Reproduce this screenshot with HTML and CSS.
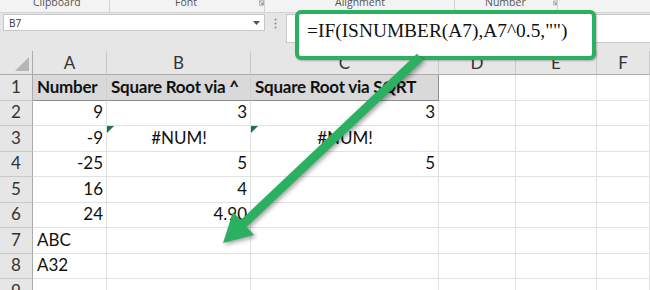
FILE: index.html
```html
<!DOCTYPE html>
<html>
<head>
<meta charset="utf-8">
<link rel="stylesheet" href="styles.css">
</head>
<body>
<div class="page">
  <div class="ribbon">
    <div class="grp g1"><span class="lbl">Clipboard</span><svg class="launch" viewBox="0 0 7 7"><path d="M0.5 0.5h6v6h-6z" fill="none" stroke="#8a8a8a"/><path d="M2 2l3 3M5 3v2h-2" fill="none" stroke="#666"/></svg></div>
    <div class="grp g2"><span class="lbl">Font</span><svg class="launch" viewBox="0 0 7 7"><path d="M0.5 0.5h6v6h-6z" fill="none" stroke="#8a8a8a"/><path d="M2 2l3 3M5 3v2h-2" fill="none" stroke="#666"/></svg></div>
    <div class="grp g3"><span class="lbl">Alignment</span><svg class="launch" viewBox="0 0 7 7"><path d="M0.5 0.5h6v6h-6z" fill="none" stroke="#8a8a8a"/><path d="M2 2l3 3M5 3v2h-2" fill="none" stroke="#666"/></svg></div>
    <div class="grp g4"><span class="lbl">Number</span><svg class="launch" viewBox="0 0 7 7"><path d="M0.5 0.5h6v6h-6z" fill="none" stroke="#8a8a8a"/><path d="M2 2l3 3M5 3v2h-2" fill="none" stroke="#666"/></svg></div>
  </div>
  <div class="fbar">
    <div class="namebox"><span class="nbtext">B7</span><svg class="dd" viewBox="0 0 7 4"><path d="M0 0h7l-3.5 4z" fill="#555"/></svg></div>
    <svg class="dots" viewBox="0 0 3 11"><circle cx="1.5" cy="1.5" r="1" fill="#888"/><circle cx="1.5" cy="5.5" r="1" fill="#888"/><circle cx="1.5" cy="9.5" r="1" fill="#888"/></svg>
    <div class="finput"></div>
  </div>
  <div class="sheet">
    <div class="corner"><svg class="tri" viewBox="0 0 14 14"><path d="M14 0v14h-14z" fill="#b5b5b5"/></svg></div>
    <div class="ch">A</div><div class="ch">B</div><div class="ch">C</div><div class="ch">D</div><div class="ch">E</div><div class="ch">F</div>

    <div class="rh">1</div><div class="c hd">Number</div><div class="c hd">Square Root via ^</div><div class="c hd hdl">Square Root via SQRT</div><div class="c"></div><div class="c"></div><div class="c"></div>
    <div class="rh">2</div><div class="c r">9</div><div class="c r">3</div><div class="c r">3</div><div class="c"></div><div class="c"></div><div class="c"></div>
    <div class="rh">3</div><div class="c r">-9</div><div class="c m err">#NUM!</div><div class="c m err">#NUM!</div><div class="c"></div><div class="c"></div><div class="c"></div>
    <div class="rh">4</div><div class="c r">-25</div><div class="c r">5</div><div class="c r">5</div><div class="c"></div><div class="c"></div><div class="c"></div>
    <div class="rh">5</div><div class="c r">16</div><div class="c r">4</div><div class="c"></div><div class="c"></div><div class="c"></div><div class="c"></div>
    <div class="rh">6</div><div class="c r">24</div><div class="c r">4.90</div><div class="c"></div><div class="c"></div><div class="c"></div><div class="c"></div>
    <div class="rh">7</div><div class="c">ABC</div><div class="c"></div><div class="c"></div><div class="c"></div><div class="c"></div><div class="c"></div>
    <div class="rh">8</div><div class="c">A32</div><div class="c"></div><div class="c"></div><div class="c"></div><div class="c"></div><div class="c"></div>
    <div class="rh">9</div><div class="c"></div><div class="c"></div><div class="c"></div><div class="c"></div><div class="c"></div><div class="c"></div>
  </div>
  <div class="callout">=IF(ISNUMBER(A7),A7^0.5,"")</div>
  <svg class="arrow" viewBox="0 0 650 290" width="650" height="290">
    <g class="arrowg">
      <line x1="420" y1="57" x2="240" y2="227" stroke="#2bb062" stroke-width="9"/>
      <polygon points="223,243 254,235 233,212" fill="#2bb062"/>
    </g>
  </svg>
</div>
</body>
</html>
```
FILE: styles.css
```css
* { box-sizing: border-box; }
html, body { margin: 0; padding: 0; }
body { width: 650px; height: 290px; overflow: hidden; background: #fff; }
.page { position: relative; width: 650px; height: 290px; overflow: hidden; font-family: Lato, "Liberation Sans", sans-serif; }

.ribbon { height: 13px; background: #f3f3f3; border-bottom: 1px solid #d4d4d4; display: flex; overflow: hidden; }
.grp { display: flex; align-items: flex-start; border-right: 1px solid #d2d2d2; height: 12px; }
.lbl { font-family: "Open Sans", sans-serif; font-size: 10.5px; line-height: 12px; color: #555; margin-top: -4px; white-space: nowrap; }
.launch { width: 6px; height: 6px; }
.g1 { width: 110px; padding-left: 33px; }
.g1 .launch { margin-left: 35px; }
.g2 { width: 155px; padding-left: 65px; }
.g2 .launch { margin-left: 62px; }
.g3 { width: 190px; padding-left: 70px; }
.g3 .launch { margin-left: 80px; }
.g4 { width: 103px; padding-left: 30px; }
.g4 .launch { margin-left: 27px; }

.fbar { height: 38px; background: #e6e6e6; display: flex; align-items: flex-start; }
.namebox { margin-left: 3px; margin-top: 1px; width: 262px; height: 17px; background: #fff; border: 1px solid #c8c8c8; display: flex; align-items: center; justify-content: space-between; padding: 0 4px 0 5px; }
.nbtext { font-family: "Open Sans", sans-serif; font-size: 10px; color: #333; }
.dd { width: 7px; height: 4px; }
.dots { width: 3px; height: 11px; margin-left: 9px; margin-top: 5px; }
.finput { margin-left: 9px; margin-top: 1px; flex: 1; height: 29px; background: #fff; border: 1px solid #c8c8c8; border-right: none; }

.sheet { display: grid; grid-template-columns: 33px 74px 144px 188px 77px 81px 53px; grid-template-rows: 24px repeat(9, 25.5px); }
.corner { background: #e6e6e6; border-right: 1px solid #ababab; border-bottom: 1px solid #ababab; position: relative; }
.tri { position: absolute; right: 3px; bottom: 3px; width: 14px; height: 14px; }
.ch { background: #e6e6e6; border-right: 1px solid #c9c9c9; border-bottom: 1px solid #ababab; text-align: center; font-size: 17px; line-height: 24px; color: #333; }
.rh { background: #e6e6e6; border-right: 1px solid #ababab; border-bottom: 1px solid #c9c9c9; text-align: center; font-size: 17px; color: #333; display: flex; align-items: flex-end; justify-content: center; padding-bottom: 3px; line-height: 20px; }
.c { position: relative; border-right: 1px solid #e1e1e1; border-bottom: 1px solid #e1e1e1; font-size: 17px; color: #111; display: flex; align-items: flex-end; padding: 0 3px 3px 4px; line-height: 20px; white-space: nowrap; }
.c.r { justify-content: flex-end; }
.c.m { justify-content: center; }
.c.hd { background: #d9d9d9; font-weight: bold; letter-spacing: -0.25px; border-bottom: 1px solid #8e8e8e; border-right-color: #cfcfcf; }
.c.hdl { border-right: 1px solid #8e8e8e; }
.c.err::before { content: ""; position: absolute; left: 0; top: 0; border-top: 7px solid #1e7145; border-right: 7px solid transparent; }

.callout { position: absolute; left: 295px; top: 10px; width: 301px; height: 50px; border: 4px solid #2bb062; border-radius: 6px; background: #fff; font-family: "Liberation Serif", serif; font-size: 19.4px; color: #111; padding: 2px 0 0 8px; line-height: 30px; white-space: nowrap; box-shadow: 1px 1px 2px rgba(0,0,0,0.25); }
.arrow { position: absolute; left: 0; top: 0; width: 650px; height: 290px; }
.arrowg { filter: drop-shadow(2px 2px 2px rgba(0,0,0,0.35)); }
```
